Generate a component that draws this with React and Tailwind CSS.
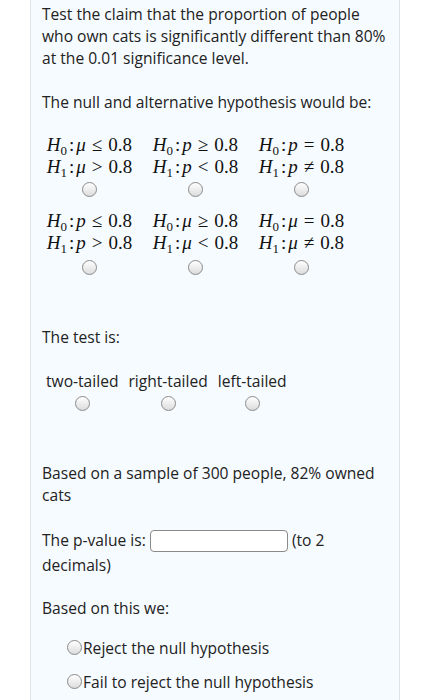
import React from 'react';

const sans = { fontFamily: '"Open Sans", "Liberation Sans", sans-serif' };

const Radio = () => (
    <span className="inline-block w-[15px] h-[15px] rounded-full border border-[#8a8a8a] bg-linear-to-b from-[#ffffff] to-[#dcdcdc] shrink-0" />
);

const H = ({ n }) => (
    <span className="italic">
        H<span className="not-italic text-[13px] relative top-[4px]">{n}</span>
    </span>
);

const Hyp = ({ v, op0, op1 }) => (
    <div className="flex flex-col items-start">
        {[['0', op0], ['1', op1]].map(([n, op]) => (
            <div key={n} className="leading-[20px] whitespace-nowrap">
                <H n={n} />
                <span className="mx-[2px]">:</span>
                <span className="italic">{v}</span>
                <span className="mx-[6px]">{op}</span>
                <span>0.8</span>
            </div>
        ))}
    </div>
);

const HypRow = ({ items, className = '', radioGap = 'mt-[2px]' }) => (
    <div className={`flex justify-start gap-[13px] pl-[1px] text-[19px] text-[#111] ${className}`} style={{ fontFamily: '"Liberation Serif", "DejaVu Serif", serif' }}>
        {items.map((it, i) => (
            <div key={i} className="w-[93px] flex flex-col items-center">
                <Hyp {...it} />
                <div className={`${radioGap} leading-none`}><Radio /></div>
            </div>
        ))}
    </div>
);

export default function App() {
    return (
        <div className="min-h-[700px] bg-white" style={sans}>
            <div className="ml-[30px] w-[370px] min-h-[700px] border-x border-[#dfe4ea] bg-[#f6fbff] px-[11px] pt-[3px] text-[15.6px] leading-[22px] text-[#222]">
                <p>Test the claim that the proportion of people who own cats is significantly different than 80% at the 0.01 significance level.</p>
                <p className="mt-[22px]">The null and alternative hypothesis would be:</p>

                <HypRow
                    className="mt-[22px]"
                    radioGap="mt-[2px]"
                    items={[
                        { v: 'μ', op0: '≤', op1: '>' },
                        { v: 'p', op0: '≥', op1: '<' },
                        { v: 'p', op0: '=', op1: '≠' },
                    ]}
                />
                <HypRow
                    className="mt-[11px]"
                    radioGap="mt-[4px]"
                    items={[
                        { v: 'p', op0: '≤', op1: '>' },
                        { v: 'μ', op0: '≥', op1: '<' },
                        { v: 'μ', op0: '=', op1: '≠' },
                    ]}
                />

                <p className="mt-[48px]">The test is:</p>
                <div className="mt-[22px] flex gap-[10px] pl-[4px]">
                    {['two-tailed', 'right-tailed', 'left-tailed'].map((t) => (
                        <div key={t} className="flex flex-col items-center">
                            <span>{t}</span>
                            <span className="mt-[4px] leading-none"><Radio /></span>
                        </div>
                    ))}
                </div>

                <p className="mt-[48px]">Based on a sample of 300 people, 82% owned cats</p>

                <div className="mt-[22px] leading-[25px]">
                    The p-value is:{' '}
                    <input className="inline-block align-middle w-[138px] h-[22px] rounded-[4px] border border-[#8a8a8a] bg-white" />{' '}
                    (to 2 decimals)
                </div>

                <p className="mt-[19px]">Based on this we:</p>
                <div className="mt-[18px] pl-[25px] flex flex-col gap-[12px]">
                    {['Reject the null hypothesis', 'Fail to reject the null hypothesis'].map((t) => (
                        <label key={t} className="flex items-center gap-[1px]">
                            <Radio />
                            <span>{t}</span>
                        </label>
                    ))}
                </div>
            </div>
        </div>
    );
}
